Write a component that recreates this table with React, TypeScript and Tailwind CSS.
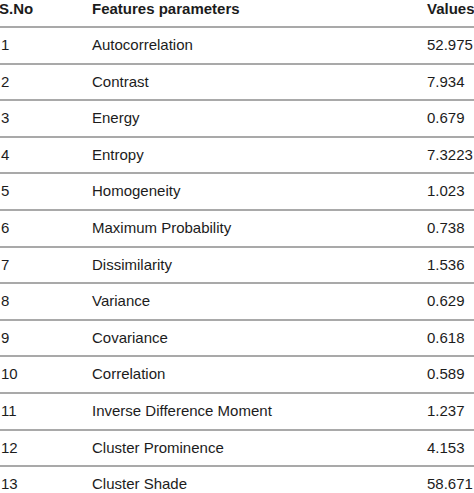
const rows: [string, string, string][] = [
  ['1', 'Autocorrelation', '52.975'],
  ['2', 'Contrast', '7.934'],
  ['3', 'Energy', '0.679'],
  ['4', 'Entropy', '7.3223'],
  ['5', 'Homogeneity', '1.023'],
  ['6', 'Maximum Probability', '0.738'],
  ['7', 'Dissimilarity', '1.536'],
  ['8', 'Variance', '0.629'],
  ['9', 'Covariance', '0.618'],
  ['10', 'Correlation', '0.589'],
  ['11', 'Inverse Difference Moment', '1.237'],
  ['12', 'Cluster Prominence', '4.153'],
  ['13', 'Cluster Shade', '58.671'],
];

export default function App() {
  return (
    <div className="h-[493px] w-[474px] overflow-hidden bg-white font-['Liberation_Sans',Arial,sans-serif] text-[15px] text-[#1c1c1c]">
      {/* Header */}
      <div className="grid h-[26px] grid-cols-[92px_335px_1fr] font-bold leading-[18px]">
        <div className="-ml-px">S.No</div>
        <div>Features parameters</div>
        <div className="whitespace-nowrap">Values</div>
      </div>

      {rows.map(([no, name, value]) => (
        <div key={no} className="border-t-2 border-[#a9a9a9]">
          <div className="grid h-[34.6px] grid-cols-[92px_335px_1fr] items-center">
            <div className="pl-px">{no}</div>
            <div>{name}</div>
            <div>{value}</div>
          </div>
        </div>
      ))}
    </div>
  );
}
